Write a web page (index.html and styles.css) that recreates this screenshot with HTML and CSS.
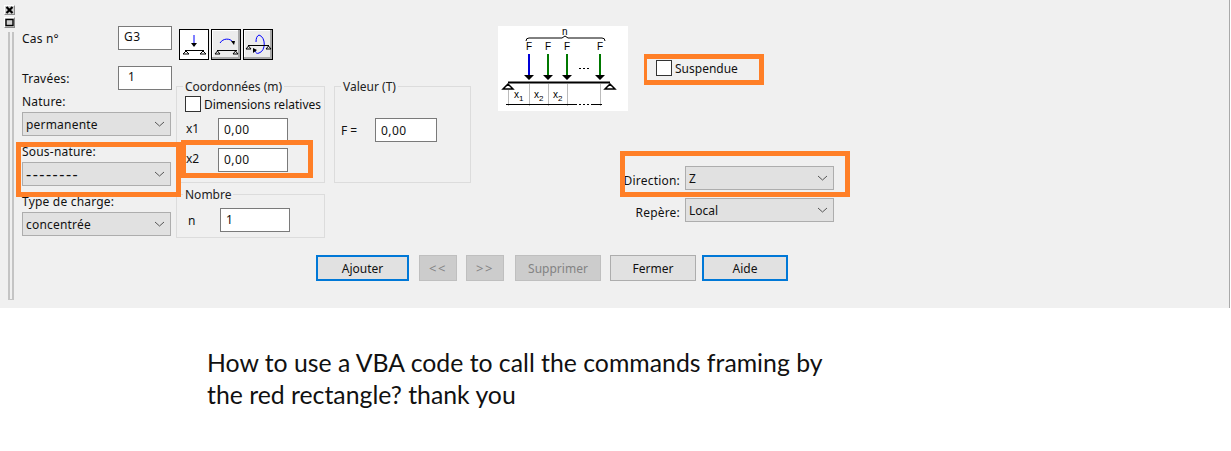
FILE: index.html
```html
<!DOCTYPE html>
<html lang="fr">
<head>
    <meta charset="utf-8">
    <title>Charge concentrée</title>
    <link rel="stylesheet" href="styles.css">
</head>
<body>
    <div class="dialog">
        <div class="gripper">
            <div class="grip_btn">
                <svg width="9" height="8" viewBox="0 0 9 8"><path d="M1.500 1 L7.500 7 M7.500 1 L1.500 7" stroke="#000" stroke-width="2.200"/></svg>
            </div>
            <div class="grip_btn grip_btn2">
                <svg width="9" height="9" viewBox="0 0 9 9"><rect x="1" y="1.500" width="7" height="6" fill="none" stroke="#000" stroke-width="1.400"/></svg>
            </div>
            <div class="grip_lines"></div>
        </div>

        <div class="main">
            <div class="panes">
                <div class="col_left">
                    <div class="row"><label>Cas n°</label><input class="txt txt_case" value="G3"></div>
                    <div class="row row2"><label>Travées:</label><input class="txt txt_case txt_center" value="1"></div>
                    <div class="field first">
                        <label>Nature:</label>
                        <div class="combo"><span>permanente</span><svg width="11" height="6" viewBox="0 0 11 6"><path d="M1 1 L5.500 5 L10 1" fill="none" stroke="#555"/></svg></div>
                    </div>
                    <div class="field">
                        <label>Sous-nature:</label>
                        <div class="combo"><span class="dashes">--------</span><svg width="11" height="6" viewBox="0 0 11 6"><path d="M1 1 L5.500 5 L10 1" fill="none" stroke="#555"/></svg></div>
                    </div>
                    <div class="field">
                        <label>Type de charge:</label>
                        <div class="combo"><span>concentrée</span><svg width="11" height="6" viewBox="0 0 11 6"><path d="M1 1 L5.500 5 L10 1" fill="none" stroke="#555"/></svg></div>
                    </div>
                </div>

                <div class="col_mid">
                    <div class="toolbar">
                        <div class="tool tool_on">
                            <svg width="28" height="29" viewBox="0 0 28 29"><path d="M14 5 V16" stroke="#00f"/><path d="M11 13 H17 L14 17 Z" fill="#000"/><path d="M5 20.500 H24" stroke="#000"/><path d="M3 24 H9 L6 21 Z M20 24 H26 L23 21 Z" fill="none" stroke="#000"/></svg>
                        </div>
                        <div class="tool">
                            <svg width="28" height="29" viewBox="0 0 28 29"><path d="M8 13 C11 8 18 8 21 12" fill="none" stroke="#00f"/><path d="M19 11 L23 11 L22 15 Z" fill="#000"/><path d="M5 20.500 H25" stroke="#000"/><path d="M3 24 H8 L5.500 21 Z M21 24 H26 L23.500 21 Z" fill="none" stroke="#000"/></svg>
                        </div>
                        <div class="tool">
                            <svg width="28" height="29" viewBox="0 0 28 29"><path d="M15 5 C22 7 22 21 15 23 C13 24 12 23 11 21" fill="none" stroke="#00f"/><path d="M15 5 C13 6 12 8 12 12" fill="none" stroke="#00f"/><path d="M9 23 L9 18 L13 20 Z" fill="#000"/><path d="M4 15.500 H25" stroke="#000"/><path d="M2 19 H7 L4.500 16 Z M22 19 H27 L24.500 16 Z" fill="none" stroke="#000"/></svg>
                        </div>
                    </div>

                    <div class="groups">
                        <fieldset class="group group_coord">
                            <legend>Coordonnées (m)</legend>
                            <div class="check_row"><span class="check"></span><label>Dimensions relatives</label></div>
                            <div class="coord_row"><label>x1</label><input class="txt txt_coord" value="0,00"></div>
                            <div class="coord_row"><label>x2</label><input class="txt txt_coord" value="0,00"></div>
                        </fieldset>
                        <fieldset class="group group_value">
                            <legend>Valeur (T)</legend>
                            <div class="value_row"><label>F =</label><input class="txt txt_value" value="0,00"></div>
                        </fieldset>
                        <fieldset class="group group_count">
                            <legend>Nombre</legend>
                            <div class="count_row"><label>n</label><input class="txt txt_coord" value="1"></div>
                        </fieldset>
                    </div>
                </div>

                <div class="col_pic">
                    <svg class="scheme" width="130" height="85" viewBox="0 0 130 85">
                        <rect width="130" height="85" fill="#fff"/>
                        <path d="M28 15 Q28 12 31 12 H64 L67 10 L70 12 H104 Q107 12 107 15" fill="none" stroke="#000"/>
                        <text x="64" y="9" class="sch_txt">n</text>
                        <text x="28" y="24" class="sch_txt">F</text>
                        <text x="47" y="24" class="sch_txt">F</text>
                        <text x="66" y="24" class="sch_txt">F</text>
                        <text x="99" y="24" class="sch_txt">F</text>
                        <path d="M31 28 V50" stroke="#0000d8" stroke-width="2"/>
                        <path d="M50 28 V50 M69 28 V50 M102 28 V50" stroke="#007800" stroke-width="2"/>
                        <path d="M26 49 H36 L31 54 Z M45 49 H55 L50 54 Z M64 49 H74 L69 54 Z M97 49 H107 L102 54 Z" fill="#000"/>
                        <path d="M10 56.500 H112" stroke="#000" stroke-width="2"/>
                        <path d="M10 58 L5 63 H15 Z M112 58 L107 63 H117 Z" fill="#fff" stroke="#000" stroke-width="1.500"/>
                        <path d="M10.500 64 V80 M31.500 58 V80 M50.500 58 V80 M69.500 58 V80 M102.500 58 V80" stroke="#bbb"/>
                        <path d="M8 78.500 H79 M93 78.500 H104" stroke="#000"/>
                        <path d="M81 78.500 H91 M81 42.500 H91" stroke="#000" stroke-dasharray="2 2"/>
                        <text x="16" y="72" class="sch_txt">x<tspan class="sch_sub" dy="3">1</tspan></text>
                        <text x="36" y="72" class="sch_txt">x<tspan class="sch_sub" dy="3">2</tspan></text>
                        <text x="55" y="72" class="sch_txt">x<tspan class="sch_sub" dy="3">2</tspan></text>
                    </svg>
                </div>

                <div class="col_right">
                    <div class="check_row check_suspend"><span class="check"></span><label>Suspendue</label></div>
                    <div class="dir_row">
                        <label>Direction:</label>
                        <div class="combo combo_dir"><span>Z</span><svg width="11" height="6" viewBox="0 0 11 6"><path d="M1 1 L5.500 5 L10 1" fill="none" stroke="#555"/></svg></div>
                    </div>
                    <div class="dir_row dir_row2">
                        <label>Repère:</label>
                        <div class="combo combo_dir"><span>Local</span><svg width="11" height="6" viewBox="0 0 11 6"><path d="M1 1 L5.500 5 L10 1" fill="none" stroke="#555"/></svg></div>
                    </div>
                </div>
            </div>

            <div class="actions">
                <button class="btn btn_focus btn_add">Ajouter</button>
                <button class="btn btn_off btn_nav">&lt;&lt;</button>
                <button class="btn btn_off btn_nav">&gt;&gt;</button>
                <button class="btn btn_off btn_wide">Supprimer</button>
                <button class="btn btn_wide">Fermer</button>
                <button class="btn btn_focus btn_wide btn_help">Aide</button>
            </div>
        </div>

        <!-- cadres orange par-dessus le dialogue -->
        <div class="mark mark_sous"></div>
        <div class="mark mark_x2"></div>
        <div class="mark mark_suspend"></div>
        <div class="mark mark_dir"></div>
    </div>

    <p class="question">How to use a VBA code to call the commands framing by<br>the red rectangle? thank you</p>
</body>
</html>
```

FILE: styles.css
```css
body {
    margin: 0;
    background: white;
    color: black;
    font-family: "Noto Sans", "Open Sans", sans-serif;
    font-size: 12px;
}

label {
    color: #111;
}

.dialog {
    position: relative;
    display: flex;
    box-sizing: border-box;
    height: 308px;
    margin-right: 1px;
    border-right: 1px solid #a9a9a9;
    background-color: #f0f0f0;
}

/* barre d'accrochage a gauche */
.gripper {
    width: 22px;
    flex: none;
    padding: 5px 0 0 4px;
    box-sizing: border-box;
}

.grip_btn {
    box-sizing: border-box;
    width: 11px;
    height: 10px;
    background-color: #cfcfcf;
    border-right: 1px solid #8a8a8a;
    border-bottom: 1px solid #8a8a8a;
    border-top: 1px solid white;
    border-left: 1px solid white;
}

.grip_btn svg {
    display: block;
}

.grip_btn2 {
    height: 11px;
    margin-top: 2px;
}

.grip_lines {
    width: 2px;
    height: 267px;
    margin: 4px 0 0 4px;
    border-left: 2px solid #c4c4c4;
    border-right: 2px solid #c4c4c4;
    border-bottom: 1px solid #c4c4c4;
}

.main {
    flex: 1;
}

.panes {
    display: flex;
    height: 255px;
}

/* colonne de gauche */
.col_left {
    width: 149px;
    padding-top: 26px;
    margin-right: 5px;
    box-sizing: border-box;
    letter-spacing: 0.2px;
}

.row {
    display: flex;
    justify-content: space-between;
    align-items: center;
    height: 24px;
    margin-right: -1px;
}

.row2 {
    margin-top: 16px;
}

.field {
    margin-top: 8px;
}

.field.first {
    margin-top: 4px;
}

.field label {
    display: block;
    height: 16px;
    line-height: 16px;
    margin-bottom: 2px;
}

.txt {
    box-sizing: border-box;
    height: 24px;
    padding: 0 5px;
    border: 1px solid #7a7a7a;
    background: white;
    color: #111;
    font-family: inherit;
    font-size: 12px;
    letter-spacing: 0.4px;
}

.txt_case {
    width: 54px;
    padding: 0 5px 4px;
}

.txt_center {
    padding-left: 9px;
}

.txt_coord {
    width: 70px;
    padding-bottom: 2px;
}

.txt_value {
    width: 62px;
}

.combo {
    display: flex;
    justify-content: space-between;
    align-items: center;
    box-sizing: border-box;
    height: 24px;
    padding: 0 5px 0 3px;
    border: 1px solid #adadad;
    background-color: #e1e1e1;
    color: #111;
}

.dashes {
    font-size: 16px;
    letter-spacing: 1.500px;
}

/* colonne du milieu */
.col_mid {
    width: 295px;
    flex: none;
    padding-top: 29px;
}

.toolbar {
    display: flex;
    gap: 2px;
    height: 31px;
    margin-left: 3px;
}

.tool {
    box-sizing: border-box;
    width: 30px;
    height: 31px;
    border: 1px solid black;
    background-color: #ececec;
    box-shadow: inset -2px -2px 0 #a8a8a8, inset 1px 1px 0 white;
}

.tool_on {
    background-color: white;
    box-shadow: none;
}

.tool svg {
    display: block;
}

.groups {
    display: grid;
    grid-template-columns: 149px 137px;
    grid-template-rows: 105px 52px;
    column-gap: 9px;
    row-gap: 3px;
    margin-top: 18px;
}

.group {
    box-sizing: border-box;
    margin: 0;
    padding: 0;
    min-width: 0;
    border: 1px solid #dcdcdc;
}

.group legend {
    margin-left: 6px;
    padding: 0 2px;
    height: 16px;
    line-height: 18px;
    color: #222;
}

.check_row {
    display: flex;
    align-items: center;
    gap: 3px;
    height: 16px;
}

.group .check_row {
    margin: 2px 0 0 8px;
}

.check {
    box-sizing: border-box;
    width: 16px;
    height: 16px;
    flex: none;
    border: 1px solid #333;
    background: white;
}

.coord_row {
    display: flex;
    align-items: center;
    height: 24px;
    margin-top: 6px;
    padding-left: 9px;
}

.coord_row label {
    width: 32px;
    padding-bottom: 3px;
}

.value_row {
    display: flex;
    align-items: center;
    height: 24px;
    margin-top: 24px;
    padding-left: 6px;
}

.value_row label {
    width: 34px;
}

.count_row {
    display: flex;
    align-items: center;
    height: 24px;
    margin-top: 6px;
    padding-left: 11px;
}

.count_row label {
    width: 32px;
}

.group_count {
    grid-column: 1;
}

/* schema */
.col_pic {
    width: 130px;
    flex: none;
    padding: 26px 0 0 27px;
}

.scheme {
    display: block;
}

.sch_txt {
    font-family: "Liberation Sans", sans-serif;
    font-size: 10px;
    fill: #000;
}

.sch_sub {
    font-size: 8px;
}

/* colonne de droite */
.col_right {
    flex: none;
    width: 206px;
    padding-top: 60px;
}

.check_suspend {
    margin-left: 28px;
    font-size: 12px;
}

.dir_row {
    display: flex;
    align-items: center;
    justify-content: flex-end;
    gap: 5px;
    height: 24px;
    margin-top: 90px;
}

.dir_row label {
    padding-top: 4px;
    letter-spacing: 0.2px;
}

.dir_row2 {
    margin-top: 8px;
}

.combo_dir {
    width: 149px;
    flex: none;
}

/* boutons du bas */
.actions {
    display: flex;
    padding-left: 294px;
    gap: 9px;
}

.btn {
    box-sizing: border-box;
    height: 26px;
    padding: 0;
    border: 1px solid #adadad;
    background-color: #e1e1e1;
    color: #111;
    font-family: inherit;
    font-size: 12px;
}

.btn_focus {
    border: 2px solid #0078d7;
}

.btn_off {
    background-color: #cccccc;
    border-color: #bfbfbf;
    color: #838383;
}

.btn_add {
    width: 93px;
    margin-right: 1px;
}

.btn_nav {
    width: 38px;
    font-size: 13px;
    letter-spacing: 1.500px;
}

.btn_nav + .btn_wide {
    margin-left: 2px;
}

.btn_wide {
    width: 86px;
}

.btn_help {
    margin-left: -3px;
}

/* cadres orange */
.mark {
    position: absolute;
    box-sizing: border-box;
    border: 5px solid #ff7f27;
}

.mark_sous {
    left: 16px;
    top: 142px;
    width: 165px;
    height: 55px;
}

.mark_x2 {
    left: 181px;
    top: 140px;
    width: 132px;
    height: 38px;
}

.mark_suspend {
    left: 644px;
    top: 54px;
    width: 120px;
    height: 31px;
    border-left-width: 3px;
}

.mark_dir {
    left: 620px;
    top: 151px;
    width: 230px;
    height: 46px;
}

.question {
    margin: 39px 0 0 207px;
    font-family: "Lato", sans-serif;
    font-size: 24.800px;
    line-height: 32px;
    color: #111;
}
```
